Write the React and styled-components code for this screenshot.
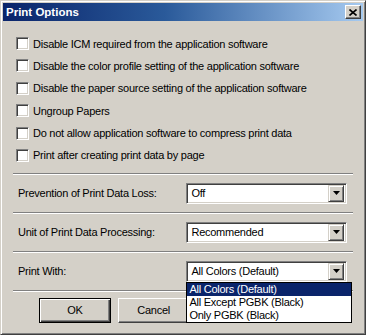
import React from "react";
import styled, { createGlobalStyle } from "styled-components";

const GlobalStyle = createGlobalStyle`
  html, body {
    margin: 0;
    padding: 0;
    background: #d4d0c8;
  }
  body {
    font-family: "Liberation Sans", Arial, sans-serif;
    font-size: 11px;
    letter-spacing: -0.25px;
    color: #000;
  }
`;

const Window = styled.div`
  width: 366px;
  height: 335px;
  box-sizing: border-box;
  background: #d4d0c8;
  border: 1px solid;
  border-color: #d4d0c8 #404040 #404040 #d4d0c8;
  box-shadow: inset 1px 1px #fff, inset -1px -1px #808080;
  padding: 2px;
  display: flex;
  flex-direction: column;
  overflow: hidden;
`;

const TitleBar = styled.div`
  height: 18px;
  flex-shrink: 0;
  background: linear-gradient(90deg, #0a246a 0%, #2a5a9a 45%, #a6caf0 100%);
  display: flex;
  align-items: center;
  justify-content: space-between;
  padding: 0 2px 0 3px;
`;

const Title = styled.span`
  color: #fff;
  font-weight: bold;
  font-size: 11.5px;
  letter-spacing: 0;
`;

const CloseButton = styled.button`
  width: 16px;
  height: 14px;
  padding: 0;
  box-sizing: border-box;
  background: #d4d0c8;
  border: 1px solid;
  border-color: #fff #404040 #404040 #fff;
  box-shadow: inset -1px -1px #808080;
  display: flex;
  align-items: center;
  justify-content: center;
`;

const Body = styled.div`
  padding: 16px 16px 0 8px;
  display: flex;
  flex-direction: column;
`;

const CheckList = styled.div`
  display: flex;
  flex-direction: column;
  gap: 9.4px;
  padding-left: 5px;
  margin-bottom: 11px;
`;

const CheckRow = styled.label`
  display: flex;
  align-items: center;
  height: 13px;
  gap: 4px;
  white-space: nowrap;
`;

const CheckBox = styled.span`
  width: 13px;
  height: 13px;
  flex-shrink: 0;
  box-sizing: border-box;
  background: #fff;
  border: 1px solid;
  border-color: #808080 #fff #fff #808080;
  box-shadow: inset 1px 1px #404040, inset -1px -1px #d4d0c8;
`;

const Separator = styled.div`
  height: 1px;
  width: 340px;
  margin-left: 2px;
  background: #808080;
  border-bottom: 1px solid #fff;
  flex-shrink: 0;
`;

const FieldRow = styled.div`
  height: 37px;
  display: flex;
  align-items: center;
  padding: 0 0 0 7px;
`;

const FieldLabel = styled.span`
  width: 171px;
  white-space: nowrap;
`;

const SelectWrap = styled.div`
  position: relative;
  width: 163px;
  height: 21px;
`;

const SelectBox = styled.div`
  width: 100%;
  height: 100%;
  box-sizing: border-box;
  background: #fff;
  border: 1px solid;
  border-color: #808080 #fff #fff #808080;
  box-shadow: inset 1px 1px #404040, inset -1px -1px #d4d0c8;
  display: flex;
  align-items: center;
  padding: 2px 2px 2px 4px;
`;

const SelectValue = styled.span`
  flex: 1;
  white-space: nowrap;
`;

const ArrowButton = styled.span`
  width: 16px;
  height: 17px;
  box-sizing: border-box;
  background: #d4d0c8;
  border: 1px solid;
  border-color: #d4d0c8 #404040 #404040 #d4d0c8;
  box-shadow: inset 1px 1px #fff, inset -1px -1px #808080;
  display: flex;
  align-items: center;
  justify-content: center;
`;

const DropList = styled.ul`
  position: absolute;
  top: 100%;
  left: 0;
  width: 166px;
  margin: 0;
  padding: 0;
  list-style: none;
  background: #fff;
  border: 1px solid #000;
  box-sizing: border-box;
  z-index: 5;
`;

const DropItem = styled.li`
  height: 13px;
  line-height: 13px;
  padding-left: 2px;
  white-space: nowrap;
  background: ${({ selected }) => (selected ? "#0a246a" : "#fff")};
  color: ${({ selected }) => (selected ? "#fff" : "#000")};
`;

const ButtonRow = styled.div`
  display: flex;
  gap: 7px;
  padding-left: 28px;
  margin-top: 6px;
`;

const Button = styled.button`
  width: 74px;
  height: 25px;
  box-sizing: border-box;
  font-family: inherit;
  font-size: 11px;
  letter-spacing: inherit;
  color: #000;
  background: #d4d0c8;
  padding: 0;
  border: 1px solid;
  border-color: #fff #404040 #404040 #fff;
  box-shadow: inset -1px -1px #808080;
  ${({ primary }) =>
    primary &&
    `
    border-color: #000;
    box-shadow: inset 1px 1px #fff, inset -1px -1px #404040, inset -2px -2px #808080;
  `}
`;

const Arrow = () => (
  <svg width="7" height="4" viewBox="0 0 7 4">
    <path d="M0 0h7L3.5 4z" fill="#000" />
  </svg>
);

const checks = [
  "Disable ICM required from the application software",
  "Disable the color profile setting of the application software",
  "Disable the paper source setting of the application software",
  "Ungroup Papers",
  "Do not allow application software to compress print data",
  "Print after creating print data by page",
];

const printWith = ["All Colors (Default)", "All Except PGBK (Black)", "Only PGBK (Black)"];

const Select = ({ value, options }) => (
  <SelectWrap>
    <SelectBox>
      <SelectValue>{value}</SelectValue>
      <ArrowButton>
        <Arrow />
      </ArrowButton>
    </SelectBox>
    {options && (
      <DropList>
        {options.map((o) => (
          <DropItem key={o} selected={o === value}>
            {o}
          </DropItem>
        ))}
      </DropList>
    )}
  </SelectWrap>
);

export default function App() {
  return (
    <>
      <GlobalStyle />
      <Window>
        <TitleBar>
          <Title>Print Options</Title>
          <CloseButton>
            <svg width="8" height="7" viewBox="0 0 8 7">
              <path d="M0.5 0.5l7 6M7.5 0.5l-7 6" stroke="#000" strokeWidth="1.6" />
            </svg>
          </CloseButton>
        </TitleBar>
        <Body>
          <CheckList>
            {checks.map((c) => (
              <CheckRow key={c}>
                <CheckBox />
                {c}
              </CheckRow>
            ))}
          </CheckList>
          <Separator />
          <FieldRow>
            <FieldLabel>Prevention of Print Data Loss:</FieldLabel>
            <Select value="Off" />
          </FieldRow>
          <Separator />
          <FieldRow>
            <FieldLabel>Unit of Print Data Processing:</FieldLabel>
            <Select value="Recommended" />
          </FieldRow>
          <Separator />
          <FieldRow>
            <FieldLabel>Print With:</FieldLabel>
            <Select value="All Colors (Default)" options={printWith} />
          </FieldRow>
          <Separator />
          {/* the last two buttons sit under the open list, their labels can't be seen */}
          <ButtonRow>
            <Button primary>OK</Button>
            <Button>Cancel</Button>
            <Button aria-label="hidden" />
            <Button aria-label="hidden" />
          </ButtonRow>
        </Body>
      </Window>
    </>
  );
}
